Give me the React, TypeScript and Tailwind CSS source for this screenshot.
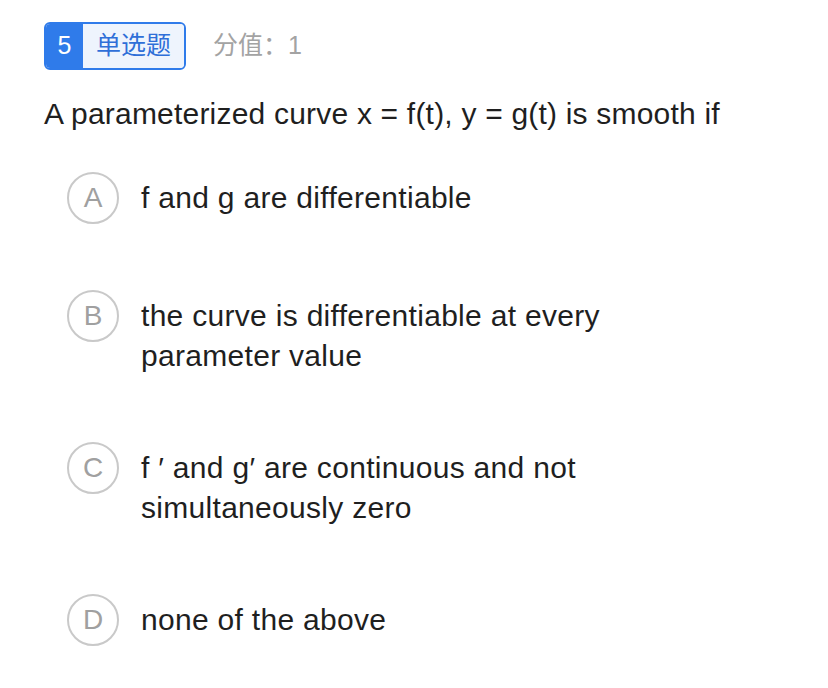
const OPTIONS = [
  { key: "A", lines: ["f and g are differentiable"] },
  { key: "B", lines: ["the curve is differentiable at every", "parameter value"] },
  { key: "C", lines: ["f \u2032 and g\u2032 are continuous and not", "simultaneously zero"] },
  { key: "D", lines: ["none of the above"] },
];

export default function App() {
  return (
    <div
      className="min-h-[688px] w-[828px] bg-white px-[44px] pt-[22px] text-[#1f1f1f]"
      style={{ fontFamily: '"Liberation Sans", Arial, "Noto Sans CJK SC", sans-serif' }}
    >
      <div className="flex items-center">
        <div className="flex h-[48px] overflow-hidden rounded-[6px] border-2 border-[#2f7bea]">
          <span className="flex w-[37px] items-center justify-center bg-[#2f7bea] text-[25px] text-white">
            5
          </span>
          <span className="flex items-center bg-[#eef4fd] px-[13px] text-[25px] text-[#2f6fd8]">
            单选题
          </span>
        </div>
        <span className="ml-[27px] text-[25px] text-[#a3a3a3]">分值：1</span>
      </div>

      <p className="mt-[24px] text-[30px] leading-[40px] tracking-[0.2px]">
        A parameterized curve x = f(t), y = g(t) is smooth if
      </p>

      <div className="mt-[38px] ml-[23px] flex flex-col gap-[66px]">
        {OPTIONS.map((opt) => (
          <div key={opt.key} className="flex items-start">
            <span className="flex h-[52px] w-[52px] shrink-0 items-center justify-center rounded-full border-2 border-[#c9c9c9] text-[28px] text-[#a0a0a0]">
              {opt.key}
            </span>
            <div className="ml-[22px] pt-[6px] text-[30px] leading-[40px] tracking-[0.3px]">
              {opt.lines.map((line) => (
                <div key={line}>{line}</div>
              ))}
            </div>
          </div>
        ))}
      </div>
    </div>
  );
}
